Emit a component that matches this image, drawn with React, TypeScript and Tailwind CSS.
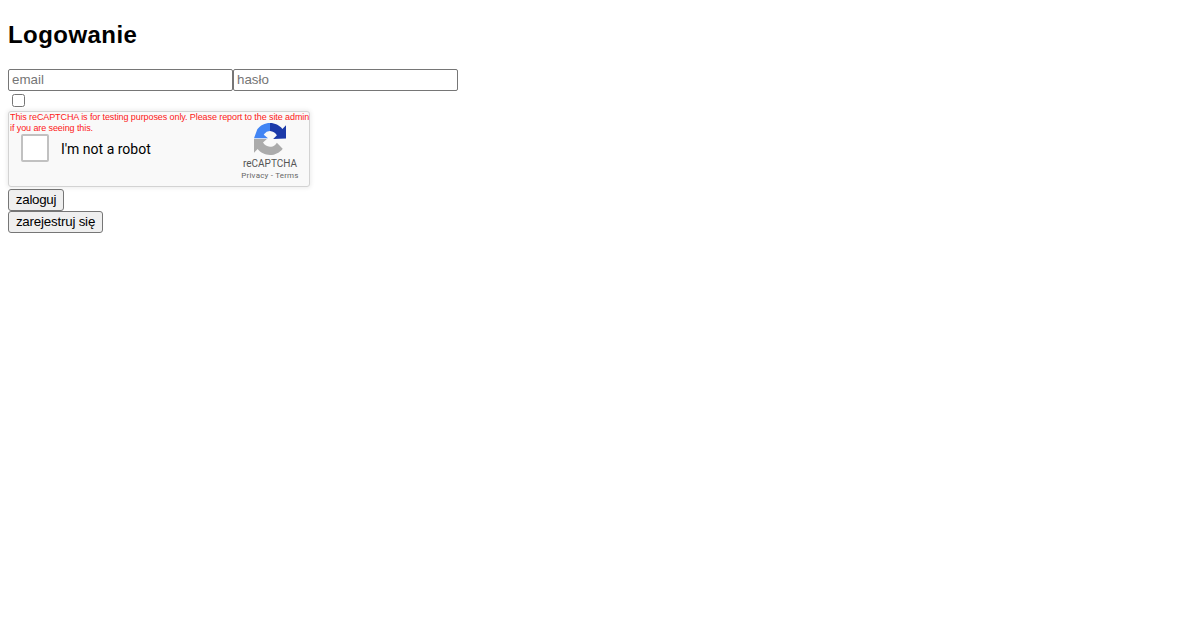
const App = () => {
  return (
    <div className="min-h-[630px] bg-white p-2 font-['Liberation_Sans',Arial,sans-serif] text-black">
      <h2 className="mt-[13px] mb-[21px] text-2xl leading-[27px] font-bold tracking-[0.45px]">Logowanie</h2>
      <form>
        <div className="flex">
          <input
            type="text"
            placeholder="email"
            className="h-[22px] w-[225px] rounded-[2px] border border-[#767676] px-[3px] pb-0.5 text-[13.33px] placeholder:text-[#757575]"
          />
          <input
            type="password"
            placeholder="hasło"
            className="h-[22px] w-[225px] rounded-[2px] border border-[#767676] px-[3px] pb-0.5 text-[13.33px] placeholder:text-[#757575]"
          />
        </div>
        <input type="checkbox" className="mt-[3px] mr-[3px] mb-1 ml-1 block h-[13px] w-[13px]" />
        <Recaptcha />
        <button
          type="button"
          className="mt-0.5 block h-[22px] w-14 rounded-[3px] border border-[#767676] bg-[#efefef] text-[13.33px] leading-4 tracking-[-0.28px]"
        >
          zaloguj
        </button>
        <button
          type="button"
          className="block h-[22px] w-[95px] rounded-[3px] border border-[#767676] bg-[#efefef] text-[13.33px] leading-4 tracking-[-0.2px]"
        >
          zarejestruj się
        </button>
      </form>
    </div>
  );
};

const Recaptcha = () => {
  return (
    <div className="relative flex h-[76px] w-[302px] items-start justify-between rounded-[3px] border border-[#d3d3d3] bg-[#f9f9f9] font-['Roboto',sans-serif] shadow-[0_0_4px_1px_rgba(0,0,0,0.08)]">
      <div className="absolute top-0 left-0 w-[302px] px-px text-[9px] leading-[11px] tracking-[-0.09px] text-[#ff0000] opacity-90 font-['Liberation_Sans',sans-serif]">
        This reCAPTCHA is for testing purposes only. Please report to the site admin if you are seeing this.
      </div>
      <div className="mt-[22px] ml-3 flex items-center">
        <div className="h-[28px] w-[28px] rounded-[2px] border-2 border-[#c1c1c1] bg-white" />
        <span className="ml-3 pt-0.5 text-[14px] text-black">I'm not a robot</span>
      </div>
      <div className="mt-[11px] mr-[10px] flex w-[58px] flex-col items-center text-[#555]">
        <svg viewBox="0 0 64 64" className="h-8 w-8">
          <path
            d="M64 31V4.7l-7.2 7.2C50.9 4.7 42 .1 32 .1V16c5.8.5 10.800 3.700 13.800 8.300l-7.500 7.500z"
            fill="#1c3aa9"
          />
          <path
            d="M32 .1C21.600.1 12.400 5 6.600 12.700L0 30.500h28l-8.500-7.200c1-2 2.600-3.500 4.300-4.500 2-1.600 4.700-2.700 8.200-2.800z"
            fill="#4285f4"
          />
          <path
            d="M0 32v27.300l7.200-7.200C13 59.300 22 64 32 64c10.400 0 19.600-5 25.400-12.700L45.700 39.400c-1 2.100-2.800 4-4.800 5.400-2 1.600-4.900 2.900-8.900 2.900-5.800-.5-11-3.700-14-8.500l7.800-7.200z"
            fill="#ababab"
          />
        </svg>
        <span className="mt-[2px] text-[10px] leading-[13px] whitespace-nowrap">reCAPTCHA</span>
        <span className="text-[8px] leading-[11px] tracking-[0.2px] whitespace-nowrap text-[#666]">Privacy - Terms</span>
      </div>
    </div>
  );
};

export default App;
